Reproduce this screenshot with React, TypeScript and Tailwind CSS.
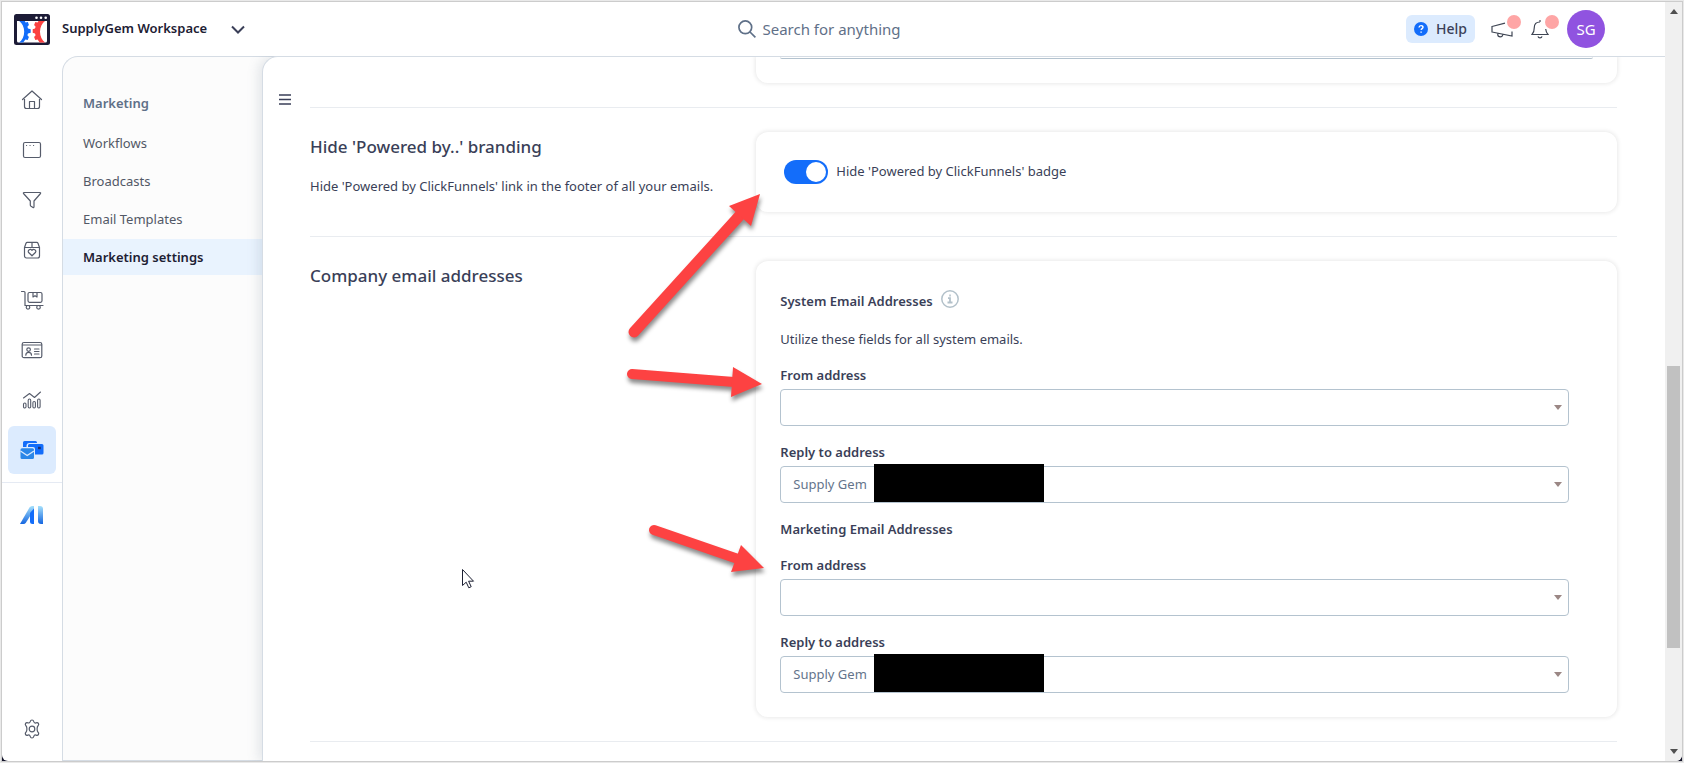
import type { ReactNode } from 'react'

const stroke = {
  fill: 'none',
  stroke: '#565c6b',
  strokeWidth: 1.2,
  strokeLinecap: 'round' as const,
  strokeLinejoin: 'round' as const,
}

const railItems: { label: string; icon: ReactNode }[] = [
  {
    label: 'Home',
    icon: (
      <svg viewBox="0 0 22 22" className="size-[22px]" {...stroke}>
        <path d="M1.500 10.500 11 2l9.500 8.500M3.500 8.800V17.500a2 2 0 0 0 2 2h11a2 2 0 0 0 2-2V8.800M8.500 19.500V12.500h5v7" />
      </svg>
    ),
  },
  {
    label: 'Sites',
    icon: (
      <svg viewBox="0 0 22 22" className="size-[22px]" {...stroke}>
        <rect x="2.500" y="3.500" width="17" height="15" rx="1.500" />
        <path d="M5.500 6.500h.1M9 6.500h.1M12.500 6.500h.1" />
      </svg>
    ),
  },
  {
    label: 'Funnels',
    icon: (
      <svg viewBox="0 0 22 22" className="size-[22px]" {...stroke}>
        <path d="M3 3.500h16c.6 0 .8.600.5 1L13 12v5.800c0 .6-.5.900-1 .6l-2.300-1.500a1 1 0 0 1-.4-.8V12L2.500 4.500c-.3-.4-.1-1 .5-1Z" />
      </svg>
    ),
  },
  {
    label: 'Products',
    icon: (
      <svg viewBox="0 0 22 22" className="size-[22px]" {...stroke}>
        <path d="M3.500 8.500h15M3.500 8.500 5 4.200a1.500 1.500 0 0 1 1.300-.9h9.400a1.500 1.500 0 0 1 1.300.9l1.500 4.300v8.500a2 2 0 0 1-2 2h-11a2 2 0 0 1-2-2ZM11 3.300v5.200" />
        <path d="M11 16.800 7.600 13.500a2 2 0 0 1 3.400-2.200 2 2 0 0 1 3.400 2.200Z" />
      </svg>
    ),
  },
  {
    label: 'Orders',
    icon: (
      <svg viewBox="0 0 24 22" className="h-[22px] w-6" {...stroke}>
        <path d="M1.500 2.500h2.500a1 1 0 0 1 1 1v13h18" />
        <rect x="8" y="3.500" width="14" height="9.800" rx="1.500" />
        <path d="M13 3.500v4.500l2-1.300 2 1.300V3.500" />
        <circle cx="8" cy="18.300" r="1.800" />
        <circle cx="18.500" cy="18.300" r="1.800" />
      </svg>
    ),
  },
  {
    label: 'Contacts',
    icon: (
      <svg viewBox="0 0 22 22" className="size-[22px]" {...stroke}>
        <rect x="1.200" y="3.500" width="19.600" height="15.200" rx="1.800" />
        <path d="M1.500 6h19M13.500 10h4.500M13.500 12.500h4.500M13.500 15h4.500M4.800 16.200c0-2 1.200-2.900 2.800-2.900s2.900.9 2.900 2.900" />
        <circle cx="7.600" cy="10.600" r="1.800" />
      </svg>
    ),
  },
  {
    label: 'Analytics',
    icon: (
      <svg viewBox="0 0 22 22" className="size-[22px]" {...stroke} strokeWidth={1.1}>
        <path d="m2.500 9 6-4.500 5 4 6-5.500" />
        <rect x="2.500" y="14" width="2.500" height="5" rx="1.200" />
        <rect x="7.200" y="10" width="2.500" height="9" rx="1.200" />
        <rect x="11.900" y="12.500" width="2.500" height="6.500" rx="1.200" />
        <rect x="16.600" y="10" width="2.500" height="9" rx="1.200" />
      </svg>
    ),
  },
]

const menuItems = ['Workflows', 'Broadcasts', 'Email Templates', 'Marketing settings']

function Logo() {
  return (
    <svg viewBox="0 0 36 31" className="h-[31px] w-9">
      <rect width="36" height="31" rx="2.500" fill="#1c1b36" />
      <path d="M3 7h30v20a1.500 1.500 0 0 1-1.500 1.500h-27A1.500 1.500 0 0 1 3 27Z" fill="#fff" />
      <g fill="#fff">
        <circle cx="22.500" cy="3.800" r="1.300" />
        <circle cx="27" cy="3.800" r="1.300" />
        <circle cx="31.700" cy="3.800" r="1.300" />
      </g>
      <path d="M5.200 7h5.600l.8 1.500 2.300-.5 1 3-1.500 1.800.6 1.700 2.700.8v3.400l-2.700.8-.6 1.800 1.500 1.700-1.200 3-2.300-.5-2.200 3H5.200c3-2.500 5-6 5-10.700S8.200 9.300 5.200 7Z" fill="#136dfa" />
      <path d="M31 7h-6.500l-1 1.500-2.200-.5-1.200 3 1.500 1.800-.6 1.700-2.300.8v3.400l2.300.8.6 1.800-1.500 1.700 1.200 3 2.300-.5 2 3H31c-3-2.500-5-6-5-10.700S28 9.300 31 7Z" fill="#fb4141" />
    </svg>
  )
}

function Header() {
  return (
    <header className="relative z-10 flex h-[54px] shrink-0 items-center bg-white pr-[60px] pl-3">
      <div className="flex flex-1 items-center">
        <Logo />
        <button type="button" className="ml-3 flex items-center gap-6 text-[13px] font-semibold text-[#1d2033]">
          SupplyGem Workspace
          <svg viewBox="0 0 14 9" className="h-[9px] w-3.5" fill="none" stroke="#3a3f58" strokeWidth="2">
            <path d="m1 1.500 6 6 6-6" />
          </svg>
        </button>
      </div>

      <button type="button" className="ml-5 flex items-center gap-1.5 text-[15px] text-[#5f7088]">
        <svg viewBox="0 0 18 18" className="size-[18px]" fill="none" stroke="#5f7088" strokeWidth="1.700">
          <circle cx="7.300" cy="7.300" r="6.400" />
          <path d="m12 12 5.400 5.400" />
        </svg>
        Search for anything
      </button>

      <div className="flex flex-1 items-center justify-end">
        <button type="button" className="flex h-7 items-center gap-2 rounded-md bg-[#dcebfe] px-2 text-sm font-medium text-[#3a3f58]">
          <svg viewBox="0 0 14 14" className="size-3.5">
            <circle cx="7" cy="7" r="7" fill="#136dfa" />
            <path d="M5 5.500C5.100 4.200 6 3.600 7 3.600s2 .6 2 1.700c0 1.300-1.700 1.300-1.900 2.600M7.100 9.600v1.200" fill="none" stroke="#fff" strokeWidth="1.400" />
          </svg>
          Help
        </button>
        <button type="button" aria-label="Announcements" className="relative ml-4">
          <svg viewBox="0 0 22 20" className="h-5 w-[22px]" fill="none" stroke="#3f4654" strokeWidth="1.200">
            <path d="M1 7v6.500M1 7.500 14 4.200M1 13l20 4V12.500M6.800 14.200v1.600c0 1.200 1.200 2 2.600 2s2.300-.9 2.700-2.400" />
          </svg>
          <span className="absolute -top-1 left-4 size-3.5 rounded-full bg-[#fea5a5]" />
        </button>
        <button type="button" aria-label="Notifications" className="relative ml-[18px]">
          <svg viewBox="0 0 18 20" className="h-5 w-[18px]" fill="none" stroke="#3f4654" strokeWidth="1.200">
            <path d="M9 1v2M14.700 10c.3 2.800 1 4.200 2.300 5.500H1c1.500-1.500 2.300-3 2.300-7C3.300 5.300 5.500 3 9 3M7 17.300c.2 1 1 1.600 2 1.600s1.800-.6 2-1.600" />
          </svg>
          <span className="absolute -top-1 left-3.5 size-3.5 rounded-full bg-[#fea5a5]" />
        </button>
        <button type="button" className="ml-[18px] size-[38px] rounded-full bg-[#9053e0] text-[15px] text-white">SG</button>
      </div>
    </header>
  )
}

function Rail() {
  return (
    <nav className="flex w-[60px] shrink-0 flex-col items-center gap-0.5 pt-5 pb-2">
      {railItems.map((item) => (
        <a key={item.label} href="#" aria-label={item.label} className="flex size-12 items-center justify-center">
          {item.icon}
        </a>
      ))}
      <a href="#" aria-label="Marketing" className="flex size-12 items-center justify-center rounded-md bg-[#dcebfe]">
        <svg viewBox="0 0 24 20" className="h-5 w-6">
          <path d="M3 7V2.500A1.500 1.500 0 0 1 4.500 1h11A1.500 1.500 0 0 1 17 2.500V3H9.500A3 3 0 0 0 6.500 6v1Z" fill="#136dfa" />
          <path d="M8 7V5.500A1.500 1.500 0 0 1 9.500 4H22a1.500 1.500 0 0 1 1.500 1.500v7.500a1.500 1.500 0 0 1-1.500 1.500h-7V9a2 2 0 0 0-2-2Z" fill="#136dfa" />
          <path d="M18 6.800h2.800v2.400H18Z" fill="#1c2f6e" />
          <path d="M.5 9.800A1.500 1.500 0 0 1 2 8.300h10.500a1.500 1.500 0 0 1 1.500 1.500v7.700a1.500 1.500 0 0 1-1.500 1.500H2a1.500 1.500 0 0 1-1.500-1.500Z" fill="#2b87e8" />
          <path d="m.5 11 6.700 4.500L14 11" fill="none" stroke="#dcebfe" strokeWidth="1.300" />
        </svg>
      </a>
      <hr className="mt-1.5 w-full border-[#e5eaf3]" />
      <a href="#" aria-label="AI" className="mt-1.5 flex size-12 items-center justify-center">
        <svg viewBox="0 0 24 20" className="h-5 w-6">
          <defs>
            <linearGradient id="ai" x1="0" y1="0" x2="0" y2="1">
              <stop offset="0" stopColor="#a5e0fb" />
              <stop offset="1" stopColor="#1566e0" />
            </linearGradient>
          </defs>
          <path d="M0 19 9.500 2.500Q10.500 1 12 1h2v4L6 17.500Q5 19 3.500 19Z" fill="url(#ai)" />
          <path d="M10 8 14 3.500V19h-1.500A2.500 2.500 0 0 1 10 16.500Z" fill="#136dfa" />
          <path d="M18 1h2a3 3 0 0 1 3 3v15h-2a3 3 0 0 1-3-3Z" fill="url(#ai)" />
        </svg>
      </a>
      <a href="#" aria-label="Settings" className="mt-auto flex size-12 items-center justify-center">
        <svg viewBox="0 0 22 22" className="size-[22px]" {...stroke}>
          <path d="M9.200 3.700c.3-1.300.8-1.700 1.800-1.700s1.500.4 1.800 1.700c.3 1 1.200 1.500 2.200 1.200 1.300-.4 2-.2 2.500.7s.4 1.500-.6 2.400c-.8.800-.8 1.200-.8 3s0 2.200.8 3c1 .9 1.100 1.500.6 2.400s-1.200 1.100-2.500.7c-1-.3-1.900.2-2.200 1.200-.3 1.300-.8 1.700-1.800 1.700s-1.500-.4-1.800-1.700c-.3-1-1.200-1.500-2.200-1.200-1.300.4-2 .2-2.500-.7s-.4-1.500.6-2.400c.8-.8.8-1.200.8-3s0-2.200-.8-3c-1-.9-1.100-1.500-.6-2.400s1.200-1.100 2.500-.7c1 .3 1.900-.2 2.200-1.200Z" />
          <circle cx="11" cy="11" r="2.800" />
        </svg>
      </a>
    </nav>
  )
}

function Field({ id, label, value = '' }: { id: string; label: string; value?: string }) {
  return (
    <div>
      <label htmlFor={id} className="mb-0.5 block text-[13px] leading-6 font-semibold">{label}</label>
      <div className="relative">
        <select id={id} className="block h-[37px] w-full appearance-none rounded border border-[#b4c3cf] bg-white px-3 text-[13px] text-[#64748b]">
          <option>{value}</option>
        </select>
        <svg viewBox="0 0 8 5" className="pointer-events-none absolute top-4 right-[7px] h-[5px] w-2">
          <path d="M0 0h8L4 5Z" fill="#9b8785" />
        </svg>
        {value && <span className="absolute -top-0.5 left-[94px] h-[38px] w-[170px] bg-black" />}
      </div>
    </div>
  )
}

function Card({ children, className }: { children?: ReactNode; className: string }) {
  return <div className={`col-span-2 bg-white shadow-[0_0_4px_1px_rgba(0,0,0,0.09)] ${className}`}>{children}</div>
}

function Section({ title, text, children }: { title: string; text?: string; children: ReactNode }) {
  return (
    <section className="grid grid-cols-3 gap-8 border-t border-[#e9ecf0] py-6">
      <div className="whitespace-nowrap">
        <h2 className="text-[17px] leading-[30px] font-medium">{title}</h2>
        {text && <p className="mt-3 text-[13px] leading-6">{text}</p>}
      </div>
      {children}
    </section>
  )
}

function Settings() {
  return (
    <div className="min-w-0 flex-1 pr-12">
      <div className="grid grid-cols-3 gap-8 pb-6">
        <div />
        <Card className="h-[26px] rounded-b-xl px-6">
          <div className="h-0.5 rounded-b border-b border-[#b4c3cf]" />
        </Card>
      </div>

      <Section title="Hide 'Powered by..' branding" text="Hide 'Powered by ClickFunnels' link in the footer of all your emails.">
        <Card className="flex h-20 items-center rounded-xl px-7">
          <label className="flex items-center gap-2 text-[13px]">
            <span className="relative flex">
              <input type="checkbox" defaultChecked className="peer h-6 w-11 appearance-none rounded-full bg-slate-300 checked:bg-[#136dfa]" />
              <span className="pointer-events-none absolute top-0.5 left-0.5 size-5 rounded-full bg-white peer-checked:left-[22px]" />
            </span>
            Hide 'Powered by ClickFunnels' badge
          </label>
        </Card>
      </Section>

      <Section title="Company email addresses">
        <Card className="rounded-xl pt-7 pr-12 pb-6 pl-6">
          <div className="flex h-6 items-center gap-2">
            <h3 className="text-[13px] leading-6 font-semibold">System Email Addresses</h3>
            <svg viewBox="0 0 18 18" className="mb-1 size-[18px]" fill="none" stroke="#b3c1ca" strokeWidth="1.500">
              <circle cx="9" cy="9" r="8.200" />
              <path d="M7 8.200h2v4M6.500 12.500h5M8.300 5.500h1.500" strokeWidth="1.800" />
            </svg>
          </div>
          <p className="mt-3.5 mb-3 text-[13px] leading-6">Utilize these fields for all system emails.</p>
          <div className="flex flex-col gap-3.5">
            <Field id="system-from" label="From address" />
            <Field id="system-reply" label="Reply to address" value="Supply Gem" />
          </div>
          <h3 className="mt-3.5 mb-3 text-[13px] leading-6 font-semibold">Marketing Email Addresses</h3>
          <div className="flex flex-col gap-3.5">
            <Field id="marketing-from" label="From address" />
            <Field id="marketing-reply" label="Reply to address" value="Supply Gem" />
          </div>
        </Card>
      </Section>

      <hr className="border-[#e9ecf0]" />
    </div>
  )
}

function ScrollBar() {
  return (
    <div className="flex w-[17px] shrink-0 flex-col items-center bg-[#f0f0f0] py-[7px]">
      <svg viewBox="0 0 8 5" className="h-[5px] w-2"><path d="M0 5h8L4 0Z" fill="#505050" /></svg>
      <div className="flex w-full flex-1 flex-col items-center pt-[352px] pb-[101px]">
        <div className="w-[13px] flex-1 bg-[#c1c1c1]" />
      </div>
      <svg viewBox="0 0 8 5" className="h-[5px] w-2"><path d="M0 0h8L4 5Z" fill="#505050" /></svg>
    </div>
  )
}

/* Red callout arrows and the pointer, drawn over the page */
function Annotations() {
  return (
    <svg viewBox="0 0 1685 764" className="pointer-events-none absolute top-0 left-0 z-20 h-[764px] w-[1685px]">
      <g fill="#fd4242" stroke="#fd4242" className="drop-shadow-[1px_4px_2px_rgba(0,0,0,0.45)]">
        <path d="M634 332 742 213" strokeWidth="11" strokeLinecap="round" />
        <path d="m760 194-31 12 22 20Z" stroke="none" />
        <path d="m632 374 102 8" strokeWidth="10" strokeLinecap="round" />
        <path d="m762 384-29-17-2 30Z" stroke="none" />
        <path d="m654 530 84 29" strokeWidth="10" strokeLinecap="round" />
        <path d="m764 568-23-23-10 27Z" stroke="none" />
      </g>
      <path d="M462.500 569.500v16l3.700-3.300 2.600 5.600 2.400-1.100-2.600-5.500h4.900Z" fill="#fff" stroke="#1d2033" />
    </svg>
  )
}

export default function App() {
  return (
    <div className="relative h-screen overflow-hidden bg-white pt-px pr-0.5 pb-0.5 pl-px font-['Noto_Sans',sans-serif] text-[#3a3f58]">
      <div className="h-full border border-[#cccccc] bg-[#14142a] shadow-[0_0_0_1px_#e9e9e9]">
        <div className="flex h-full overflow-hidden rounded-b-[6px] bg-white">
          <div className="flex min-w-0 flex-1 flex-col">
            <Header />
            <div className="flex min-h-0 flex-1">
              <Rail />
              <div className="flex min-w-0 flex-1 rounded-tl-2xl border-t border-b border-l border-[#d5dce4] bg-[#fcfcfc]">
                <aside className="w-[199px] shrink-0 pt-[34px] text-[13px] text-[#525866]">
                  <h2 className="mb-2.5 px-5 leading-6 font-semibold text-[#5f7088]">Marketing</h2>
                  <nav className="flex flex-col gap-0.5">
                    {menuItems.map((item) => (
                      <a
                        key={item}
                        href="#"
                        className={`px-5 leading-9 ${item === 'Marketing settings' ? 'bg-[#e9f3fe] font-semibold text-[#1d2033]' : ''}`}
                      >
                        {item}
                      </a>
                    ))}
                  </nav>
                </aside>
                <main className="-mt-px -mb-px flex min-w-0 flex-1 overflow-hidden rounded-tl-2xl border-t border-l border-[#d5dce4] bg-white shadow-[-4px_0_12px_rgba(100,116,139,0.16)]">
                  <div className="w-[47px] shrink-0 pt-[37px] pl-4">
                    <button type="button" aria-label="Toggle menu" className="block">
                      <svg viewBox="0 0 12 11" className="h-[11px] w-3" stroke="#3a3f58" strokeWidth="1.500">
                        <path d="M0 1h12M0 5.500h12M0 10h12" />
                      </svg>
                    </button>
                  </div>
                  <Settings />
                </main>
              </div>
            </div>
          </div>
          <ScrollBar />
        </div>
      </div>
      <Annotations />
    </div>
  )
}
